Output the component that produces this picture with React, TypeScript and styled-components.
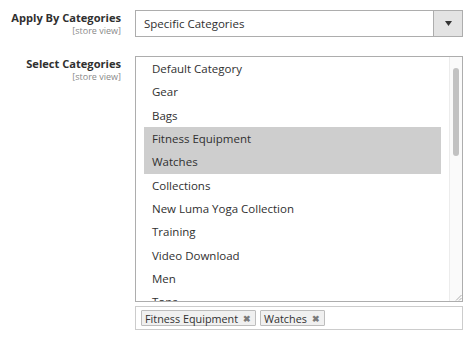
import React from 'react';
import styled, { createGlobalStyle } from 'styled-components';

const GlobalStyle = createGlobalStyle`
  html, body {
    margin: 0;
    padding: 0;
    background: #ffffff;
  }
  body {
    font-family: 'Open Sans', 'Noto Sans', sans-serif;
    color: #303030;
  }
`;

const Form = styled.div`
  display: flex;
  flex-direction: column;
  gap: 19px;
  padding: 10px 0 0 0;
  width: 474px;
`;

const FieldRow = styled.div`
  display: flex;
  align-items: flex-start;
  gap: 14px;
`;

const LabelCol = styled.div`
  width: 121px;
  display: flex;
  flex-direction: column;
  align-items: flex-end;
`;

const LabelText = styled.span`
  font-weight: 700;
  font-size: 11.1px;
  line-height: 15px;
  color: #303030;
  white-space: nowrap;
`;

const Scope = styled.span`
  font-size: 9px;
  line-height: 12px;
  color: #8a8a8a;
`;

const Control = styled.div`
  display: flex;
  flex-direction: column;
  gap: 4px;
  width: 328px;
`;

const Select = styled.div`
  display: flex;
  height: 27px;
  border: 1px solid #adadad;
  box-sizing: border-box;
`;

const SelectValue = styled.div`
  flex: 1;
  padding-left: 8px;
  font-size: 11.5px;
  line-height: 25px;
  color: #303030;
`;

const SelectArrow = styled.div`
  width: 28px;
  background: #e3e3e3;
  border-left: 1px solid #adadad;
  display: flex;
  align-items: center;
  justify-content: center;
`;

const ListBox = styled.div`
  display: flex;
  height: 246px;
  border: 1px solid #adadad;
  box-sizing: border-box;
  overflow: hidden;
`;

const Options = styled.div`
  flex: 1;
  padding: 0 8px;
  overflow: hidden;
`;

const Option = styled.div<{ $selected?: boolean }>`
  height: 23.33px;
  line-height: 23.33px;
  padding-left: 8px;
  font-size: 11.5px;
  color: #303030;
  background: ${(p) => (p.$selected ? '#cecece' : 'transparent')};
  white-space: nowrap;
`;

const ScrollTrack = styled.div`
  width: 13px;
  background: #fafafa;
  border-left: 1px solid #ececec;
  display: flex;
  flex-direction: column;
  align-items: center;
  padding-top: 11px;
  box-sizing: border-box;
`;

const ScrollThumb = styled.div`
  width: 6px;
  height: 88px;
  border-radius: 3px;
  background: #c2c2c2;
`;

const Grip = styled.div`
  margin-top: auto;
  align-self: flex-end;
  display: flex;
`;

const TagBox = styled.div`
  display: flex;
  gap: 4px;
  height: 24px;
  padding: 3px 5px;
  border: 1px solid #cccccc;
  box-sizing: border-box;
`;

const Tag = styled.div`
  display: flex;
  align-items: center;
  gap: 5px;
  height: 16px;
  padding: 0 4px 0 3px;
  background: #f0f0f0;
  border: 1px solid #bdbdbd;
  border-radius: 1px;
  box-sizing: border-box;
  font-size: 10.8px;
  color: #303030;
  white-space: nowrap;
`;

const Remove = styled.span`
  font-size: 9px;
  color: #7a7a7a;
  font-weight: 700;
`;

const categories = [
  { name: 'Default Category' },
  { name: 'Gear' },
  { name: 'Bags' },
  { name: 'Fitness Equipment', selected: true },
  { name: 'Watches', selected: true },
  { name: 'Collections' },
  { name: 'New Luma Yoga Collection' },
  { name: 'Training' },
  { name: 'Video Download' },
  { name: 'Men' },
  { name: 'Tops' },
];

const App = () => {
  const selected = categories.filter((c) => c.selected);
  return (
    <>
      <GlobalStyle />
      <Form>
        <FieldRow>
          <LabelCol>
            <LabelText>Apply By Categories</LabelText>
            <Scope>[store view]</Scope>
          </LabelCol>
          <Control>
            <Select>
              <SelectValue>Specific Categories</SelectValue>
              <SelectArrow>
                <svg width="7" height="5" viewBox="0 0 7 5">
                  <path d="M0 0h7L3.5 5z" fill="#333" />
                </svg>
              </SelectArrow>
            </Select>
          </Control>
        </FieldRow>
        <FieldRow>
          <LabelCol>
            <LabelText>Select Categories</LabelText>
            <Scope>[store view]</Scope>
          </LabelCol>
          <Control>
            <ListBox>
              <Options>
                {categories.map((c) => (
                  <Option key={c.name} $selected={c.selected}>
                    {c.name}
                  </Option>
                ))}
              </Options>
              <ScrollTrack>
                <ScrollThumb />
                <Grip>
                  <svg width="7" height="7" viewBox="0 0 7 7">
                    <path d="M6.5 1L1 6.5M6.5 4L4 6.5" stroke="#9a9a9a" strokeWidth="0.8" />
                  </svg>
                </Grip>
              </ScrollTrack>
            </ListBox>
            <TagBox>
              {selected.map((c) => (
                <Tag key={c.name}>
                  {c.name}
                  <Remove>✖</Remove>
                </Tag>
              ))}
            </TagBox>
          </Control>
        </FieldRow>
      </Form>
    </>
  );
};

export default App;
